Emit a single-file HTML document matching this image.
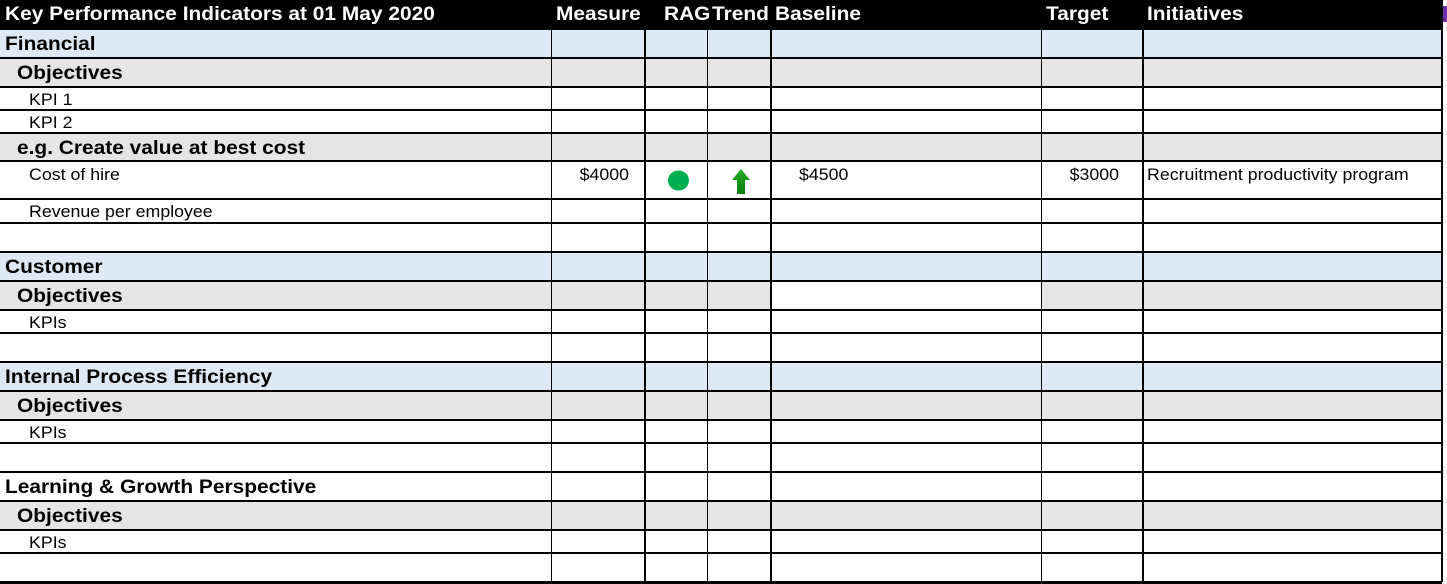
<!DOCTYPE html>
<html><head><meta charset="utf-8"><style>
*{margin:0;padding:0;box-sizing:border-box}
body{width:1447px;height:584px;background:#fff;position:relative;overflow:hidden;font-family:"Liberation Sans",Arial,sans-serif;color:#000}
.r{position:absolute;left:0;width:1442px}
.h{position:absolute;left:0;width:1442px;height:2px;background:#000}
.v{position:absolute;top:29px;width:1px;height:553px;background:#000}
.t{position:absolute;font-size:17px;line-height:17px;white-space:nowrap;transform:scaleX(1.045);transform-origin:left top}
.tr{transform-origin:right top}
.b{position:absolute;font-size:19px;line-height:19px;font-weight:bold;white-space:nowrap;transform:scaleX(1.1);transform-origin:left top}
.w{color:#fff}
</style></head><body>
<div class="r" style="top:0;height:29px;background:#000"></div>
<div style="position:absolute;left:1443px;top:6px;width:4px;height:16px;background:#7030a0"></div>
<div class="r" style="top:29px;height:29px;background:#ddeaf6"></div>
<div class="r" style="top:58px;height:29px;background:#e5e5e5"></div>
<div class="r" style="top:133px;height:28px;background:#e5e5e5"></div>
<div class="r" style="top:252px;height:29px;background:#ddeaf6"></div>
<div class="r" style="top:281px;height:29px;background:#e5e5e5"></div>
<div style="position:absolute;left:770px;top:281px;width:271px;height:29px;background:#fff"></div>
<div class="r" style="top:362px;height:29px;background:#ddeaf6"></div>
<div class="r" style="top:391px;height:29px;background:#e5e5e5"></div>
<div class="r" style="top:501px;height:29px;background:#e5e5e5"></div>
<div class="h" style="top:28px"></div>
<div class="h" style="top:57px"></div>
<div class="h" style="top:86px"></div>
<div class="h" style="top:109px"></div>
<div class="h" style="top:132px"></div>
<div class="h" style="top:160px"></div>
<div class="h" style="top:198px"></div>
<div class="h" style="top:222px"></div>
<div class="h" style="top:251px"></div>
<div class="h" style="top:280px"></div>
<div class="h" style="top:309px"></div>
<div class="h" style="top:332px"></div>
<div class="h" style="top:361px"></div>
<div class="h" style="top:390px"></div>
<div class="h" style="top:419px"></div>
<div class="h" style="top:442px"></div>
<div class="h" style="top:471px"></div>
<div class="h" style="top:500px"></div>
<div class="h" style="top:529px"></div>
<div class="h" style="top:552px"></div>
<div class="h" style="top:581px;height:3px"></div>
<div class="v" style="left:551px"></div>
<div class="v" style="left:644px;width:2px"></div>
<div class="v" style="left:707px"></div>
<div class="v" style="left:770px;width:2px"></div>
<div class="v" style="left:1041px"></div>
<div class="v" style="left:1142px;width:2px"></div>
<div class="v" style="left:1441px;top:0;height:582px;width:2px"></div>
<div class="b w" style="left:5px;top:5px">Key Performance Indicators at 01 May 2020</div>
<div class="b w" style="left:556px;top:5px">Measure</div>
<div class="b w" style="left:664px;top:5px">RAG</div>
<div class="b w" style="left:712px;top:5px">Trend</div>
<div class="b w" style="left:775px;top:5px">Baseline</div>
<div class="b w" style="left:1046px;top:5px">Target</div>
<div class="b w" style="left:1147px;top:5px">Initiatives</div>
<div class="b" style="left:5px;top:35px">Financial</div>
<div class="b" style="left:17px;top:64px">Objectives</div>
<div class="t" style="left:29px;top:91px">KPI 1</div>
<div class="t" style="left:29px;top:114px">KPI 2</div>
<div class="b" style="left:17px;top:139px">e.g. Create value at best cost</div>
<div class="t" style="left:29px;top:166px">Cost of hire</div>
<div class="t tr" style="left:560px;width:69px;text-align:right;top:166px">$4000</div>
<svg style="position:absolute;left:667px;top:170px" width="23" height="21"><ellipse cx="11.5" cy="10.5" rx="10.5" ry="10" fill="#00b050"/></svg>
<svg style="position:absolute;left:731px;top:168px" width="20" height="27"><defs><linearGradient id="g" x1="0" y1="0" x2="0" y2="1"><stop offset="0" stop-color="#22b022"/><stop offset="1" stop-color="#0a7a0a"/></linearGradient></defs><path d="M10 1 L19 12 L14 12 L14 26 L6 26 L6 12 L1 12 Z" fill="url(#g)"/></svg>
<div class="t" style="left:799px;top:166px">$4500</div>
<div class="t tr" style="left:1050px;width:69px;text-align:right;top:166px">$3000</div>
<div class="t" style="left:1147px;top:166px">Recruitment productivity program</div>
<div class="t" style="left:29px;top:203px">Revenue per employee</div>
<div class="b" style="left:5px;top:258px">Customer</div>
<div class="b" style="left:17px;top:287px">Objectives</div>
<div class="t" style="left:29px;top:314px">KPIs</div>
<div class="b" style="left:5px;top:368px">Internal Process Efficiency</div>
<div class="b" style="left:17px;top:397px">Objectives</div>
<div class="t" style="left:29px;top:424px">KPIs</div>
<div class="b" style="left:5px;top:478px">Learning &amp; Growth Perspective</div>
<div class="b" style="left:17px;top:507px">Objectives</div>
<div class="t" style="left:29px;top:534px">KPIs</div>
</body></html>
